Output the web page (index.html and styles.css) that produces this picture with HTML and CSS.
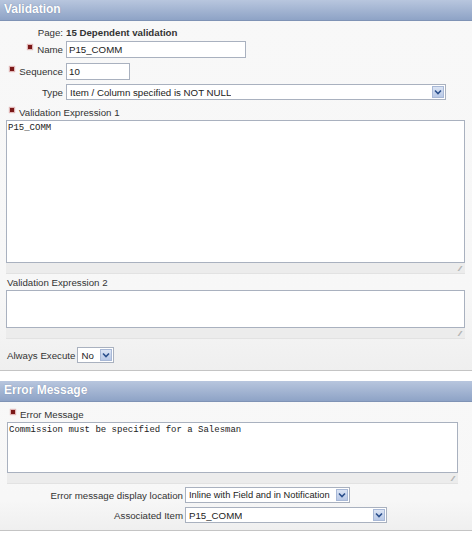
FILE: index.html
```html
<!DOCTYPE html>
<html lang="en">
<head>
    <meta charset="UTF-8">
    <title>Validation</title>
    <link rel="stylesheet" href="styles.css">
</head>
<body>
    <div class="region">
        <div class="region-head">Validation</div>
        <div class="region-body">
            <div class="row row-page">
                <span class="lbl">Page:</span>
                <span class="val">15 Dependent validation</span>
            </div>
            <div class="row row-name">
                <label class="lbl req">Name</label>
                <input type="text" class="text name-input" value="P15_COMM">
            </div>
            <div class="row row-seq">
                <label class="lbl req">Sequence</label>
                <input type="text" class="text seq-input" value="10">
            </div>
            <div class="row row-type">
                <label class="lbl">Type</label>
                <div class="select type-select">
                    <span class="sel-text">Item / Column specified is NOT NULL</span>
                    <span class="sel-btn"><svg width="8" height="6" viewBox="0 0 8 6"><path d="M1 1.5 L4 4.5 L7 1.5" fill="none" stroke="#2b4f8c" stroke-width="1.6"/></svg></span>
                </div>
            </div>

            <!-- Expression 1 -->
            <div class="block expr1">
                <label class="blk-lbl req">Validation Expression 1</label>
                <textarea class="area area-big">P15_COMM</textarea>
                <div class="grip-bar"><span class="grip">⁄⁄</span></div>
            </div>

            <!-- Expression 2 -->
            <div class="block expr2">
                <label class="blk-lbl">Validation Expression 2</label>
                <textarea class="area area-small"></textarea>
                <div class="grip-bar"><span class="grip">⁄⁄</span></div>
            </div>

            <div class="row row-always">
                <label class="lbl-plain">Always Execute</label>
                <div class="select always-select">
                    <span class="sel-text">No</span>
                    <span class="sel-btn"><svg width="8" height="6" viewBox="0 0 8 6"><path d="M1 1.5 L4 4.5 L7 1.5" fill="none" stroke="#2b4f8c" stroke-width="1.6"/></svg></span>
                </div>
            </div>
        </div>
    </div>

    <div class="region region-err">
        <div class="region-head">Error Message</div>
        <div class="region-body">
            <div class="block err-block">
                <label class="blk-lbl req">Error Message</label>
                <textarea class="area area-err">Commission must be specified for a Salesman</textarea>
                <div class="grip-bar"><span class="grip">⁄⁄</span></div>
            </div>
            <div class="row row-loc">
                <label class="lbl wide">Error message display location</label>
                <div class="select loc-select">
                    <span class="sel-text">Inline with Field and in Notification</span>
                    <span class="sel-btn"><svg width="8" height="6" viewBox="0 0 8 6"><path d="M1 1.5 L4 4.5 L7 1.5" fill="none" stroke="#2b4f8c" stroke-width="1.6"/></svg></span>
                </div>
            </div>
            <div class="row row-item">
                <label class="lbl wide">Associated Item</label>
                <div class="select item-select">
                    <span class="sel-text">P15_COMM</span>
                    <span class="sel-btn"><svg width="8" height="6" viewBox="0 0 8 6"><path d="M1 1.5 L4 4.5 L7 1.5" fill="none" stroke="#2b4f8c" stroke-width="1.6"/></svg></span>
                </div>
            </div>
        </div>
    </div>
</body>
</html>
```

FILE: styles.css
```css
* {
    margin: 0;
    padding: 0;
    box-sizing: border-box;
}

body {
    background: #ffffff;
    font-family: "Liberation Sans", Arial, sans-serif;
    font-size: 9.7px;
    color: #333;
}

.region {
    width: 472px;
    background: linear-gradient(#f8f8f8 0%, #f7f7f7 80%, #efefef 100%);
    border-bottom: 1px solid #c4c4c4;
}

.region-err {
    margin-top: 10px;
}

.region-head {
    height: 21px;
    line-height: 19px;
    padding-left: 4px;
    color: #fff;
    font-size: 12px;
    font-weight: bold;
    background: linear-gradient(#b8c6de, #8ea3c6);
    border-bottom: 1px solid #7f93b5;
    text-shadow: 0 0 1px rgba(60, 80, 120, 0.5);
}

.region-body {
    padding-bottom: 7px;
}

.row {
    display: flex;
    align-items: center;
}

.lbl {
    width: 63px;
    margin-right: 3px;
    text-align: right;
    white-space: nowrap;
}

.lbl.wide {
    width: 183px;
    margin-right: 2px;
}

.lbl-plain {
    flex: none;
    margin-left: 7px;
    margin-right: 2px;
    white-space: nowrap;
}

.val {
    font-weight: bold;
}

.req::before {
    content: '';
    display: inline-block;
    width: 4px;
    height: 4px;
    background: #7a1818;
    box-shadow: 0 0 1px 1px rgba(180, 60, 60, 0.35);
    margin-right: 5px;
    vertical-align: 4px;
}

.row-page {
    height: 14px;
    margin-top: 4px;
}

.row-name {
    margin-top: 2px;
}

.row-seq {
    margin-top: 5px;
}

.row-type {
    margin-top: 4px;
}

.text {
    height: 17px;
    border: 1px solid #a9b1bf;
    background: #fff;
    font-family: "Liberation Sans", Arial, sans-serif;
    font-size: 9.7px;
    color: #222;
    padding: 0 2px;
    outline: none;
}

.name-input {
    width: 180px;
}

.seq-input {
    width: 64px;
}

.select {
    display: flex;
    align-items: center;
    justify-content: space-between;
    height: 16px;
    background: #fff;
    border: 1px solid #a9b1bf;
    padding-left: 3px;
    padding-right: 1px;
    color: #222;
    white-space: nowrap;
}

.sel-text {
    overflow: hidden;
}

.loc-select .sel-text {
    font-size: 9.3px;
}

.sel-btn {
    flex: none;
    width: 12px;
    height: 12px;
    margin-left: 2px;
    background: linear-gradient(#dbe4f4, #b8c8e6);
    border: 1px solid #a8b8d6;
    display: flex;
    align-items: center;
    justify-content: center;
}

.type-select {
    width: 380px;
}

.always-select {
    width: 37px;
}

.loc-select {
    width: 165px;
}

.item-select {
    width: 202px;
}

.block {
    padding-left: 6px;
}

.blk-lbl {
    display: block;
    height: 14px;
    line-height: 14px;
    padding-left: 1px;
}

.blk-lbl.req {
    padding-left: 4px;
}

.expr1 {
    margin-top: 6px;
}

.expr2 {
    margin-top: 2px;
}

.area {
    display: block;
    width: 459px;
    border: 1px solid #a9b1bf;
    background: #fff;
    font-family: "Liberation Mono", "Courier New", monospace;
    font-size: 9px;
    color: #222;
    padding: 2px 1px;
    resize: none;
    outline: none;
}

.area-big {
    height: 143px;
}

.area-small {
    height: 38px;
}

.grip-bar {
    width: 459px;
    height: 11px;
    background: #ececec;
    border-bottom: 1px solid #e2e2e2;
    text-align: right;
    padding-right: 5px;
    line-height: 10px;
}

.grip {
    font-size: 8px;
    color: #999;
    letter-spacing: -2px;
}

.row-always {
    margin-top: 8px;
}

.err-block {
    padding-left: 7px;
    margin-top: 6px;
}

.area-err {
    width: 451px;
    height: 51px;
}

.err-block .grip-bar {
    width: 451px;
}

.row-loc {
    margin-top: 3px;
}

.row-item {
    margin-top: 4px;
}
```
